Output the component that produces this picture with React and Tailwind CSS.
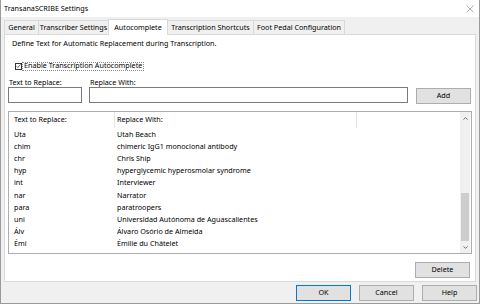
const rows = [
  ["Uta", "Utah Beach"],
  ["chim", "chimeric IgG1 monoclonal antibody"],
  ["chr", "Chris Ship"],
  ["hyp", "hyperglycemic hyperosmolar syndrome"],
  ["int", "Interviewer"],
  ["nar", "Narrator"],
  ["para", "paratroopers"],
  ["uni", "Universidad Autónoma de Aguascalientes"],
  ["Álv", "Álvaro Osório de Almeida"],
  ["Émi", "Émilie du Châtelet"],
];

function Btn({ children, w = "w-[55px]", def = false }) {
  return (
    <div
      className={`${w} h-[16px] flex items-center justify-center bg-[#e1e1e1] border ${
        def ? "border-[#0078d7]" : "border-[#adadad]"
      }`}
    >
      {children}
    </div>
  );
}

export default function App() {
  return (
    <div className="w-[480px] h-[304px] bg-[#f0f0f0] border-x border-b border-[#9a9a9a] flex flex-col text-black overflow-hidden font-['Noto_Sans',sans-serif] text-[7.2px] leading-none">
      {/* Title bar */}
      <div className="h-[17px] shrink-0 bg-white flex items-center justify-between pl-[3px] pr-[5px]">
        <span>TransanaSCRIBE Settings</span>
        <svg width="8" height="8" viewBox="0 0 8 8">
          <path d="M0.5 0.5 L7.5 7.5 M7.5 0.5 L0.5 7.5" stroke="#a0a0a0" strokeWidth="0.8" fill="none" />
        </svg>
      </div>

      {/* Tabs */}
      <div className="h-[17px] shrink-0 flex items-end pl-[3px]">
        <div className="w-[34px] h-[14px] flex items-center justify-center border-t border-l border-[#d9d9d9]">General</div>
        <div className="w-[70px] h-[14px] flex items-center justify-center border-t border-l border-[#d9d9d9]">Transcriber Settings</div>
        <div className="w-[60px] h-[16px] -mb-px relative z-10 flex items-center justify-center bg-white border-t border-x border-[#d9d9d9]">Autocomplete</div>
        <div className="w-[85px] h-[14px] flex items-center justify-center border-t border-[#d9d9d9]">Transcription Shortcuts</div>
        <div className="w-[92px] h-[14px] flex items-center justify-center border-t border-x border-[#d9d9d9]">Foot Pedal Configuration</div>
      </div>

      {/* Panel */}
      <div className="ml-[3px] w-[472px] h-[248px] shrink-0 bg-white border border-[#d9d9d9] flex flex-col px-[3px]">
        <div className="h-[18px] flex items-center pl-[4px]">
          Define Text for Automatic Replacement during Transcription.
        </div>
        <div className="mt-[5px] h-[16px] flex items-center pl-[7px]">
          <div className="w-[7px] h-[7px] border border-[#333] flex items-center justify-center">
            <svg width="6" height="6" viewBox="0 0 6 6">
              <path d="M0.6 3.1 L2.3 4.8 L5.4 1" stroke="#222" strokeWidth="0.8" fill="none" />
            </svg>
          </div>
          <div className="h-[9px] flex items-center px-[1px] border border-dotted border-[#8a8a8a]">
            Enable Transcription Autocomplete
          </div>
        </div>
        <div className="mt-[4px] h-[9px] flex items-center">
          <div className="w-[74px] pl-[1px]">Text to Replace:</div>
          <div className="ml-[7px] pl-[1px]">Replace With:</div>
        </div>
        <div className="h-[16px] flex">
          <div className="w-[74px] h-[16px] border border-[#7a7a7a] bg-white" />
          <div className="ml-[7px] w-[319px] h-[16px] border border-[#7a7a7a] bg-white" />
          <div className="ml-[8px] mt-[1px]">
            <Btn>Add</Btn>
          </div>
        </div>

        {/* List */}
        <div className="mt-[8px] h-[143px] border border-[#adadad] flex">
          <div className="flex-1 flex flex-col">
            <div className="h-[16px] flex shrink-0">
              <div className="w-[106px] flex items-center pl-[5px] border-r border-[#e5e5e5]">Text to Replace:</div>
              <div className="w-[242px] flex items-center pl-[2px] border-r border-[#e5e5e5]">Replace With:</div>
            </div>
            {rows.map(([a, b]) => (
              <div key={a} className="h-[12.22px] flex items-center shrink-0">
                <div className="w-[106px] pl-[5px]">{a}</div>
                <div className="pl-[2px] whitespace-nowrap">{b}</div>
              </div>
            ))}
          </div>
          <div className="w-[10px] mr-[1px] bg-[#f0f0f0] flex flex-col">
            <div className="h-[12px] flex items-center justify-center">
              <svg width="5" height="3" viewBox="0 0 5 3">
                <path d="M0.5 2.6 L2.5 0.6 L4.5 2.6" stroke="#606060" strokeWidth="0.9" fill="none" />
              </svg>
            </div>
            <div className="flex-1 flex flex-col justify-end">
              <div className="h-[48px] mx-[1px] bg-[#cdcdcd]" />
            </div>
            <div className="h-[12px] flex items-center justify-center">
              <svg width="5" height="3" viewBox="0 0 5 3">
                <path d="M0.5 0.4 L2.5 2.4 L4.5 0.4" stroke="#606060" strokeWidth="0.9" fill="none" />
              </svg>
            </div>
          </div>
        </div>

        <div className="mt-[8px] h-[16px] flex justify-end pr-[2px]">
          <Btn>Delete</Btn>
        </div>
      </div>

      {/* Bottom buttons */}
      <div className="mt-[3px] flex justify-end gap-[8px] pr-[2px]">
        <Btn def>OK</Btn>
        <Btn>Cancel</Btn>
        <Btn>Help</Btn>
      </div>
    </div>
  );
}
